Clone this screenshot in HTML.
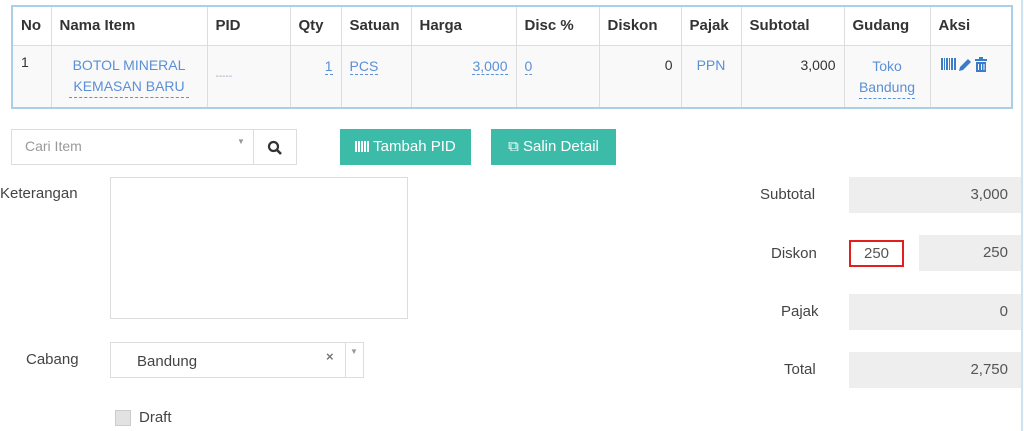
<!DOCTYPE html>
<html><head><meta charset="utf-8"><style>
*{box-sizing:border-box;margin:0;padding:0}
body{width:1024px;height:431px;background:#fff;font-family:"Liberation Sans",sans-serif;font-size:14px;color:#333;position:relative;overflow:hidden}
.a{position:absolute}
table{position:absolute;left:11px;top:5px;width:1002px;border-collapse:collapse;border:2px solid #a8d0e6}
td,th{border:1px solid #ddd;vertical-align:top;padding:8px 8px}
th{height:39px;text-align:left;font-weight:bold;font-size:15px;padding-top:10px;background:#fff}
tbody td{background:#f9f9f9;height:63px}
.l{color:#5b8fd6;border-bottom:1px dashed #5b8fd6}
.r{text-align:right}.c{text-align:center}
.g{background:#eee;color:#555;text-align:right;padding-right:13px;line-height:36px;font-size:15px}
.lbl{font-size:15px;color:#444}
.btn{background:#3dbba9;color:#fff;font-size:15px;line-height:36px;text-align:center}
</style></head><body>
<table>
<thead><tr>
<th style="width:39px">No</th><th style="width:156px">Nama Item</th><th style="width:83px">PID</th><th style="width:51px">Qty</th><th style="width:70px">Satuan</th><th style="width:105px">Harga</th><th style="width:83px">Disc %</th><th style="width:82px">Diskon</th><th style="width:60px">Pajak</th><th style="width:103px">Subtotal</th><th style="width:86px">Gudang</th><th>Aksi</th>
</tr></thead>
<tbody><tr>
<td>1</td>
<td class="c" style="padding-top:9px;line-height:21px"><span class="l" style="display:inline-block;padding:0 4px;color:#5b8fd6">BOTOL MINERAL<br>KEMASAN BARU</span></td>
<td style="padding-top:20px"><span style="color:#9ab;font-size:10px">-----</span></td>
<td class="r" style="padding-top:12px"><span class="l">1</span></td>
<td style="padding-top:12px"><span class="l">PCS</span></td>
<td class="r" style="padding-top:12px"><span class="l">3,000</span></td>
<td style="padding-top:12px"><span class="l">0</span></td>
<td class="r" style="padding-top:11px">0</td>
<td class="c" style="padding-top:11px;color:#5b8fd6">PPN</td>
<td class="r" style="padding-top:11px">3,000</td>
<td class="c" style="padding-top:10px;line-height:21px"><span class="l" style="display:inline-block">Toko<br>Bandung</span></td>
<td style="padding-top:10px;color:#3a7cc8">
<svg width="50" height="18" viewBox="0 0 50 18"><g fill="#3a7cc8"><rect x="2" y="2" width="2" height="12"/><rect x="5" y="2" width="1" height="12"/><rect x="7" y="2" width="2" height="12"/><rect x="10" y="2" width="1" height="12"/><rect x="12" y="2" width="2" height="12"/><rect x="15" y="2" width="2" height="12"/></g><path d="M20 15l1-4 8-8 3 3-8 8z" fill="#3a7cc8"/><g fill="#3a7cc8"><rect x="36" y="3" width="12" height="2"/><rect x="40" y="1" width="4" height="2"/><path d="M37 6h10v10h-10z M39 8v6h1v-6z M42 8v6h1v-6z M44.5 8v6h1v-6z" fill-rule="evenodd"/></g></svg>
</td>
</tr></tbody>
</table>
<div class="a" style="left:1021px;top:0;width:2px;height:431px;background:#cfe2f1"></div>

<div class="a" style="left:11px;top:129px;width:286px;height:36px;border:1px solid #ddd"></div>
<div class="a" style="left:253px;top:129px;width:1px;height:36px;background:#ddd"></div>
<div class="a" style="left:25px;top:138px;color:#999;font-size:14px">Cari Item</div>
<div class="a" style="left:237px;top:137px;color:#999;font-size:8px">▼</div>
<svg class="a" style="left:267px;top:140px" width="16" height="16" viewBox="0 0 16 16"><circle cx="6.5" cy="6.5" r="4.5" fill="none" stroke="#333" stroke-width="2.2"/><path d="M10 10l4 4" stroke="#333" stroke-width="2.6"/></svg>

<div class="a btn" style="left:340px;top:129px;width:131px;height:36px">
<span style="display:inline-block;width:14px;height:11px;background:repeating-linear-gradient(90deg,#fff 0 2px,transparent 2px 3px);vertical-align:-1px"></span> Tambah PID</div>
<div class="a btn" style="left:491px;top:129px;width:125px;height:36px">⧉ Salin Detail</div>

<div class="a lbl" style="left:0;top:185px">Keterangan</div>
<div class="a" style="left:110px;top:177px;width:298px;height:142px;border:1px solid #ddd"></div>
<div class="a lbl" style="left:26px;top:351px">Cabang</div>
<div class="a" style="left:110px;top:342px;width:254px;height:36px;border:1px solid #ddd"></div>
<div class="a" style="left:345px;top:342px;width:1px;height:36px;background:#ddd"></div>
<div class="a" style="left:137px;top:353px;font-size:15px;color:#444">Bandung</div>
<div class="a" style="left:326px;top:349px;font-size:13px;color:#777;font-weight:bold">×</div>
<div class="a" style="left:350px;top:347px;font-size:8px;color:#999">▼</div>
<div class="a" style="left:115px;top:410px;width:16px;height:16px;background:#e2e2e2;border:1px solid #ccc"></div>
<div class="a lbl" style="left:139px;top:409px">Draft</div>

<div class="a lbl" style="left:760px;top:186px">Subtotal</div>
<div class="a g" style="left:849px;top:177px;width:172px;height:36px">3,000</div>
<div class="a lbl" style="left:771px;top:245px">Diskon</div>
<div class="a" style="left:849px;top:240px;width:55px;height:27px;border:2px solid #e21f1f;text-align:center;line-height:23px;font-size:15px;color:#555">250</div>
<div class="a g" style="left:919px;top:235px;width:102px;height:36px">250</div>
<div class="a lbl" style="left:781px;top:303px">Pajak</div>
<div class="a g" style="left:849px;top:294px;width:172px;height:36px">0</div>
<div class="a lbl" style="left:784px;top:361px">Total</div>
<div class="a g" style="left:849px;top:352px;width:172px;height:36px">2,750</div>
</body></html>
